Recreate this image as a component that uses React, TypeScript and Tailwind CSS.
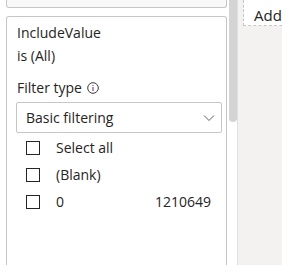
import React from "react";

function Checkbox() {
  return <div className="w-[14px] h-[14px] border border-[#252423] bg-white shrink-0" />;
}

function Row({ label, value }: { label: string; value?: string }) {
  return (
    <div className="h-[27px] flex items-center pl-[10px] w-[195px]">
      <Checkbox />
      <span className="ml-[16px] flex-1">{label}</span>
      {value && <span>{value}</span>}
    </div>
  );
}

export default function App() {
  return (
    <div className="flex w-[282px] h-[265px] overflow-hidden bg-white text-[#252423] text-[14px] font-['Segoe_UI','Open_Sans',sans-serif]">
      <div className="w-[229px] pl-[6px] flex flex-col shrink-0">
        <div className="w-[221px] h-[8px] border border-t-0 border-[#c8c6c4] rounded-b-[3px] bg-[#f8f8f8]" />
        <div className="mt-[8px] w-[221px] flex-1 border border-b-0 border-[#c8c6c4] rounded-t-[3px] pl-[9px] pt-[4px]">
          <div className="pl-px leading-[23px]">IncludeValue</div>
          <div className="pl-px leading-[23px]">is (All)</div>
          <div className="pl-px mt-[11px] leading-[20px] flex items-center">
            <span>Filter type</span>
            <svg className="ml-[5px]" width="12" height="12" viewBox="0 0 12 12">
              <circle cx="6" cy="6" r="5.3" fill="none" stroke="#3b3a39" strokeWidth="1" />
              <rect x="5.5" y="5" width="1" height="4" fill="#742774" />
              <rect x="5.5" y="3" width="1" height="1" fill="#742774" />
            </svg>
          </div>
          <div className="mt-[4px] w-[206px] h-[31px] border border-[#c8c6c4] rounded-[2px] flex items-center pl-[9px] pr-[6px]">
            <span className="flex-1">Basic filtering</span>
            <svg width="12" height="8" viewBox="0 0 12 8">
              <path d="M1 1.5 L6 6.5 L11 1.5" fill="none" stroke="#605e5c" strokeWidth="1" />
            </svg>
          </div>
          <div className="mt-[1px]">
            <Row label="Select all" />
            <Row label="(Blank)" />
            <Row label="0" value="1210649" />
          </div>
        </div>
      </div>
      <div className="w-[8px] shrink-0 bg-white">
        <div className="h-[122px] w-[8px] bg-[#d4d4d4] rounded-b-[4px]" />
      </div>
      <div className="w-px shrink-0 bg-[#e1dfdd]" />
      <div className="flex-1 bg-[#f3f2f1] pl-[5px]">
        <div className="h-[26px] w-[60px] bg-white border border-dashed border-t-0 border-[#c8c6c4] pl-[10px] pt-[5px] leading-[20px] text-[15px]">
          Add
        </div>
      </div>
    </div>
  );
}
